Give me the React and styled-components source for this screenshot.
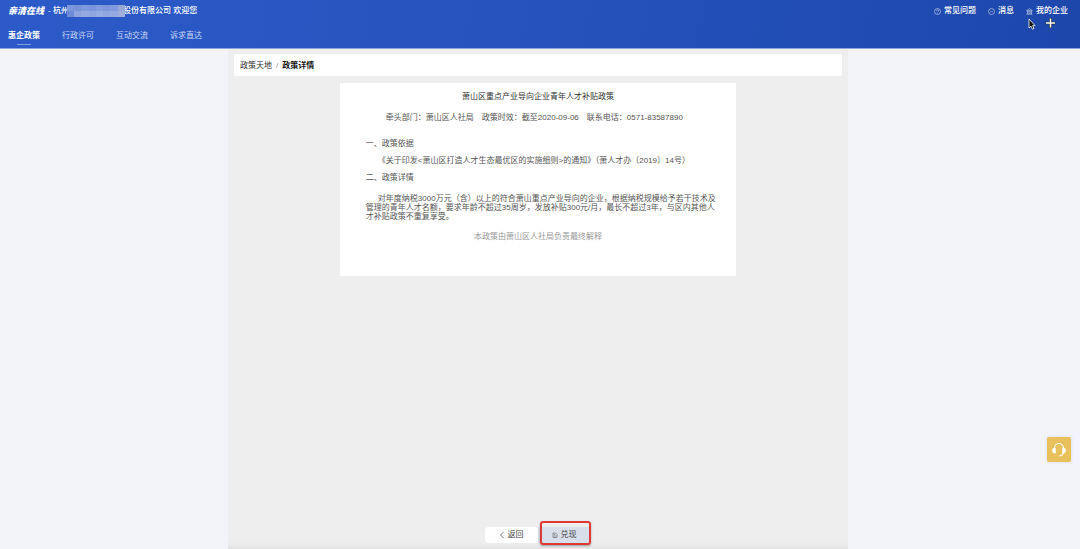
import React from "react";
import styled, { createGlobalStyle } from "styled-components";

const GlobalStyle = createGlobalStyle`
  *,
  *::before,
  *::after {
    box-sizing: border-box;
  }

  body {
    margin: 0;
    background: #f3f4fa;
    color: #333;
    font-family: "Liberation Sans", "Noto Sans CJK SC", sans-serif;
    font-size: 8px;
    line-height: 12px;
  }

  a {
    color: inherit;
    text-decoration: none;
  }
`;

const Page = styled.div`
  display: flex;
  flex-direction: column;
  min-height: 100vh;
`;

const Header = styled.header`
  color: #fff;
  background: linear-gradient(100deg, #2c5bc9 0%, #2553bd 50%, #1d47ab 100%);
  border-bottom: 1px solid #8fa5dc;
  padding: 5px 12px 0 8px;
`;

const TopBar = styled.div`
  display: flex;
  align-items: center;
  justify-content: space-between;
  font-weight: 500;
`;

const Welcome = styled.div`
  display: flex;
  align-items: center;
  white-space: pre;
`;

const Logo = styled.strong`
  font-size: 9px;
  font-style: italic;
  font-weight: 900;
  margin-right: 4px;
`;

const Mosaic = styled.span`
  display: grid;
  grid-template-columns: repeat(8, 1fr);
  width: 58px;
  height: 12px;
  margin: 0 -2px;
  z-index: 1;
`;

const Tile = styled.i`
  background: ${(props) => props.$tone};
`;

const TopLinks = styled.div`
  display: flex;
  gap: 12px;
`;

const TopLink = styled.a`
  display: flex;
  align-items: center;
  gap: 3px;

  svg {
    width: 7px;
    height: 7px;
    opacity: 0.8;
  }
`;

const Nav = styled.nav`
  display: flex;
  gap: 22px;
  margin-top: 13px;
`;

const NavItem = styled.a`
  display: flex;
  flex-direction: column;
  align-items: center;
  height: 18px;
  color: ${(props) => (props.$active ? "#fff" : "#cbd8f4")};
  font-weight: ${(props) => (props.$active ? 700 : 400)};

  &::after {
    content: "";
    width: 14px;
    height: 1px;
    margin-top: 2px;
    background: ${(props) => (props.$active ? "#7f9de0" : "transparent")};
  }
`;

const Content = styled.div`
  display: flex;
  flex: 1;
  justify-content: center;
  padding-right: 4px;
`;

const Main = styled.main`
  display: flex;
  flex-direction: column;
  align-items: center;
  width: 57.6%;
  padding: 5px 6px 6px;
  background: #eee;
  box-shadow: inset 0 -8px 8px -8px rgba(0, 0, 0, 0.1);
`;

const Breadcrumb = styled.nav`
  display: flex;
  align-self: stretch;
  gap: 4px;
  padding: 6px 6px 4px;
  color: #333;
  background: #fff;
  border-radius: 2px;

  span {
    color: #999;
  }

  strong {
    color: #111;
  }
`;

const Card = styled.article`
  width: 65.2%;
  min-width: 396px;
  margin-top: 7px;
  padding: 8px 18px 33px 26px;
  color: #555;
  background: #fff;
`;

const Title = styled.h1`
  margin: 0 8px 9px 0;
  color: #333;
  font-size: 8px;
  font-weight: 400;
  text-align: center;
`;

const Meta = styled.div`
  display: flex;
  gap: 8px;
  margin-bottom: 14px;
  padding-left: 20px;
  white-space: nowrap;
`;

const SectionTitle = styled.h2`
  margin: 0;
  font-size: 8px;
  font-weight: 400;
`;

const Basis = styled.p`
  margin: 5px 0;
  padding-left: 12px;
  white-space: nowrap;
`;

const Detail = styled.p`
  margin: 10px 0;
  line-height: 9px;
  text-indent: 12px;
`;

const Note = styled.p`
  margin: 0 8px 0 0;
  color: #999;
  text-align: center;
`;

const Actions = styled.footer`
  display: flex;
  margin-top: auto;
`;

const Button = styled.button`
  position: relative;
  display: flex;
  align-items: center;
  justify-content: center;
  gap: 2px;
  width: 53px;
  height: 16px;
  padding: 0;
  color: #444;
  font: inherit;
  background: ${(props) => (props.$primary ? "#d9deeb" : "#fff")};
  border: 0;
  border-radius: ${(props) => (props.$primary ? "0 4px 4px 0" : "4px 0 0 4px")};

  svg {
    width: 6px;
    height: 8px;
  }
`;

const Highlight = styled.span`
  position: absolute;
  inset: -6px 0 -2px 2px;
  border: 2px solid #dc3a34;
  border-radius: 3px;
  box-shadow: 0 1px 2px rgba(0, 0, 0, 0.35);
`;

const Service = styled.button`
  position: fixed;
  right: 9px;
  bottom: 87px;
  width: 24px;
  height: 25px;
  padding: 4px;
  background: #e8c05c;
  border: 0;
  border-radius: 2px;
  box-shadow: 0 0 3px rgba(120, 120, 160, 0.25);

  svg {
    display: block;
    width: 16px;
    height: 16px;
  }
`;

const Pointers = styled.svg`
  position: absolute;
  top: 16px;
  right: 22px;
  width: 32px;
  height: 16px;
  pointer-events: none;
`;

const tiles = [
  "#7c97dc", "#7893da", "#7f99dd", "#7994da", "#829bdd", "#7b96db", "#819ade", "#98a8d6",
  "#6d8bd7", "#8da4e0", "#94a9e2", "#8fa5e0", "#96abe3", "#90a6e1", "#94a9e2", "#a0b0dc",
];

const navItems = ["惠企政策", "行政许可", "互动交流", "诉求直达"];

const iconProps = {
  viewBox: "0 0 14 14",
  fill: "none",
  stroke: "currentColor",
  strokeWidth: 1.2,
  "aria-hidden": true,
};

const HelpIcon = () => (
  <svg {...iconProps}>
    <circle cx="7" cy="7" r="6" />
    <path d="M5 5.5a2 2 0 1 1 2.8 1.8Q7 7.700 7 8.700M7 10v1" />
  </svg>
);

const MessageIcon = () => (
  <svg {...iconProps}>
    <circle cx="7" cy="7" r="6" />
    <path d="M4 7h1M6.500 7h1M9 7h1" strokeWidth="1.600" />
  </svg>
);

const CompanyIcon = () => (
  <svg {...iconProps}>
    <path d="M1 5.500 7 1.500l6 4zM3 6v6M5.700 6v6M8.300 6v6M11 6v6M1 12.500h12" />
  </svg>
);

const BackIcon = () => (
  <svg viewBox="0 0 6 8" fill="none" stroke="#555" aria-hidden="true">
    <path d="M4.500 1 1.500 4l3 3" strokeWidth="0.800" />
  </svg>
);

const CashIcon = () => (
  <svg viewBox="0 0 12 16" fill="none" stroke="#555" aria-hidden="true">
    <path d="M2 4h5l3 3v6H2zM4 7h2M4 10h4" strokeWidth="1.200" />
  </svg>
);

const HeadsetIcon = () => (
  <svg viewBox="0 0 16 16" fill="none" stroke="#fff" aria-hidden="true">
    <path d="M3.500 6.500V6a4.500 4.500 0 0 1 9 0v.5" strokeWidth="1.100" />
    <path
      d="M4.500 5.800v5.400H4A2.700 2.700 0 0 1 4 5.800zM11.500 5.800v5.400h.5a2.700 2.700 0 0 0 0-5.400z"
      fill="#fff"
      strokeWidth="0.500"
    />
    <path d="M12.200 11c-.4 2-1.600 2.900-3.700 3" strokeWidth="1.100" />
  </svg>
);

const topLinks = [
  { label: "常见问题", Icon: HelpIcon },
  { label: "消息", Icon: MessageIcon },
  { label: "我的企业", Icon: CompanyIcon },
];

const App = () => (
  <Page>
    <GlobalStyle />
    <Header>
      <TopBar>
        <Welcome>
          <Logo>亲清在线</Logo>
          <span>- 杭州</span>
          <Mosaic aria-hidden="true">
            {tiles.map((tone, index) => (
              <Tile key={index} $tone={tone} />
            ))}
          </Mosaic>
          <span>股份有限公司 欢迎您</span>
        </Welcome>
        <TopLinks>
          {topLinks.map(({ label, Icon }) => (
            <TopLink key={label} href="#">
              <Icon />
              {label}
            </TopLink>
          ))}
        </TopLinks>
      </TopBar>
      <Nav>
        {navItems.map((label, index) => (
          <NavItem key={label} href="#" $active={index === 0}>
            {label}
          </NavItem>
        ))}
      </Nav>
    </Header>

    <Content>
      <Main>
        <Breadcrumb>
          <a href="#">政策天地</a>
          <span>/</span>
          <strong>政策详情</strong>
        </Breadcrumb>

        <Card>
          <Title>萧山区重点产业导向企业青年人才补贴政策</Title>
          <Meta>
            <span>牵头部门：萧山区人社局</span>
            <span>政策时效：截至2020-09-06</span>
            <span>联系电话：0571-83587890</span>
          </Meta>
          <SectionTitle>一、政策依据</SectionTitle>
          <Basis>
            《关于印发&lt;萧山区打造人才生态最优区的实施细则&gt;的通知》（萧人才办〔2019〕14号）
          </Basis>
          <SectionTitle>二、政策详情</SectionTitle>
          <Detail>
            对年度纳税3000万元（含）以上的符合萧山重点产业导向的企业，根据纳税规模给予若干技术及管理的青年人才名额，要求年龄不超过35周岁，发放补贴300元/月，最长不超过3年，与区内其他人才补贴政策不重复享受。
          </Detail>
          <Note>本政策由萧山区人社局负责最终解释</Note>
        </Card>

        <Actions>
          <Button type="button">
            <BackIcon />
            返回
          </Button>
          <Button type="button" $primary>
            <CashIcon />
            兑现
            <Highlight />
          </Button>
        </Actions>
      </Main>
    </Content>

    <Service type="button" aria-label="客服">
      <HeadsetIcon />
    </Service>

    <Pointers viewBox="0 0 32 16" aria-hidden="true">
      <path
        d="M3 3v9l2-1.800 1.500 3 1.500-.7-1.400-2.900H9z"
        fill="#111"
        stroke="#fff"
        strokeWidth="0.800"
      />
      <path d="M24.500 2v10M19.500 7h10" stroke="#333" strokeWidth="2.600" />
      <path d="M24.500 2.500v9M20 7h9" stroke="#fff" strokeWidth="1.400" />
    </Pointers>
  </Page>
);

export default App;
